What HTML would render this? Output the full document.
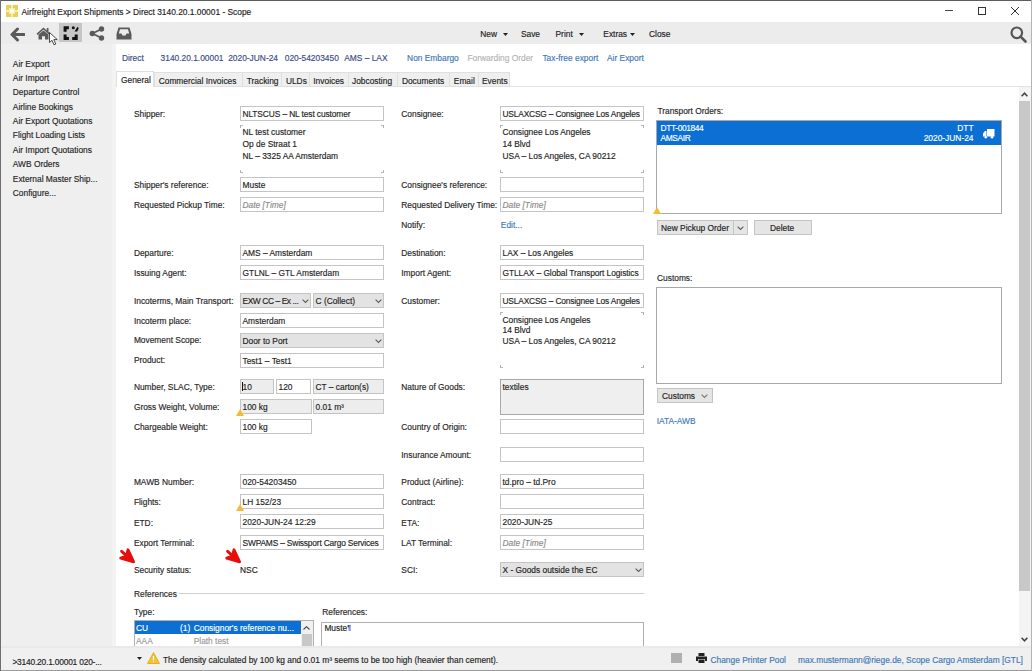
<!DOCTYPE html><html><head><meta charset="utf-8"><style>
html,body{margin:0;padding:0}
body{width:1032px;height:671px;overflow:hidden;position:relative;background:#fff;font-family:"Liberation Sans",sans-serif;font-size:8.4px;color:#262626}
.t{position:absolute;white-space:nowrap;line-height:10px;font-size:8.4px;-webkit-text-stroke:0.15px currentColor}
.b{position:absolute;box-sizing:border-box}
.inp{position:absolute;box-sizing:border-box;height:15px;border:1px solid #c4c4c4;background:#fff}
</style></head><body>

<div class="b" style="left:0px;top:0px;width:1032px;height:671px;background:#fff"></div>
<div class="b" style="left:1px;top:22px;width:1030px;height:22px;background:#ececec"></div>
<div class="b" style="left:1px;top:44px;width:115px;height:602px;background:#efefef"></div>
<div class="b" style="left:112px;top:44px;width:4px;height:602px;background:#f3f3f3"></div>
<div class="b" style="left:0px;top:0px;width:1032px;height:1px;background:#5c5c5c"></div>
<div class="b" style="left:0px;top:0px;width:1px;height:671px;background:#6e6e6e"></div>
<div class="b" style="left:1031px;top:0px;width:1px;height:671px;background:#b4b4b4"></div>
<div class="b" style="left:0px;top:670px;width:1032px;height:1px;background:#9a9a9a"></div>
<svg class="b" style="left:6px;top:5px" width="12" height="12" viewBox="0 0 12 12"><rect x="0" y="0" width="12" height="12" fill="#f8eca6"/><path d="M0 0h5v3h-2v2h-3z M12 0h-5v3h2v2h3z M0 12h5v-3h-2v-2h-3z M12 12h-5v-3h2v-2h3z" fill="#e7cf58"/><circle cx="6" cy="6" r="2.2" fill="#fdfdf8"/></svg>
<div class="t" style="left:21.5px;top:6.5px;color:#1c1c1c;">Airfreight Export Shipments &gt; Direct 3140.20.1.00001 - Scope</div>
<div class="b" style="left:945px;top:10px;width:8px;height:1px;background:#444"></div>
<div class="b" style="left:978px;top:7px;width:8px;height:8px;border:1px solid #333"></div>
<svg class="b" style="left:1011px;top:7px" width="8" height="8" viewBox="0 0 8 8"><path d="M0 0L8 8M8 0L0 8" stroke="#333" stroke-width="1"/></svg>
<svg class="b" style="left:10px;top:27px" width="15" height="15" viewBox="0 0 15 15"><path d="M14 7.5H3 M7.5 2L2 7.5L7.5 13" fill="none" stroke="#5a5a5a" stroke-width="3" stroke-linecap="round" stroke-linejoin="round"/></svg>
<svg class="b" style="left:36px;top:27px" width="15" height="13" viewBox="0 0 15 13"><path d="M7.5 0.5L0.5 6.8L1.6 7.9L7.5 2.6L13.4 7.9L14.5 6.8L12.5 5V1H10.8V3.4Z" fill="#5a5a5a"/><path d="M2.5 7.6L7.5 3.4L12.5 7.6V12.5H9V9.2H6V12.5H2.5Z" fill="#5a5a5a"/></svg>
<div class="b" style="left:59px;top:23px;width:23px;height:19px;background:#c6c6c6"></div>
<svg class="b" style="left:63px;top:26px" width="16" height="15" viewBox="0 0 16 15"><path d="M0.6 0.3h5.3v3h-2.3v2.4h-3z M0.6 13.9h5.3v-3h-2.3v-2.3h-3z M14.7 13.9h-5.5v-3h2.5v-2.3h3z M11.5 5.5h2.8l1.4-3.2l-1.2-1.6z" fill="#111"/><circle cx="10.3" cy="1.8" r="1.5" fill="#111"/></svg>
<svg class="b" style="left:49px;top:32px" width="10" height="14" viewBox="0 0 10 14"><path d="M0.5 0.5V10.5L3 8.3L5 12.8L6.8 12L4.8 7.6H8.3Z" fill="#fff" stroke="#222" stroke-width="0.8"/></svg>
<svg class="b" style="left:89px;top:26px" width="16" height="16" viewBox="0 0 16 16"><path d="M12.5 3L3.5 7.5L12.5 12" fill="none" stroke="#5a5a5a" stroke-width="1.8"/><circle cx="12.5" cy="3" r="2.7" fill="#5a5a5a"/><circle cx="3.3" cy="7.5" r="2.7" fill="#5a5a5a"/><circle cx="12.5" cy="12" r="2.7" fill="#5a5a5a"/></svg>
<svg class="b" style="left:116px;top:27px" width="16" height="13" viewBox="0 0 16 13"><path d="M2.5 0.5H13.5L15.5 7V12.5H0.5V7Z M2.8 6.5H5.5L6.5 8.5H9.5L10.5 6.5H13.2L12 2.2H4Z" fill="#5a5a5a" fill-rule="evenodd"/></svg>
<div class="t" style="left:480.2px;top:28.799999999999997px;color:#222;">New</div>
<div class="t" style="left:520.9px;top:28.799999999999997px;color:#222;">Save</div>
<div class="t" style="left:555.5px;top:28.799999999999997px;color:#222;">Print</div>
<div class="t" style="left:603.3px;top:28.799999999999997px;color:#222;">Extras</div>
<div class="t" style="left:649px;top:28.799999999999997px;color:#222;">Close</div>
<svg class="b" style="left:503.3px;top:33px" width="5" height="3" viewBox="0 0 5 3"><path d="M0 0H5L2.5 3Z" fill="#222"/></svg>
<svg class="b" style="left:578.5px;top:33px" width="5" height="3" viewBox="0 0 5 3"><path d="M0 0H5L2.5 3Z" fill="#222"/></svg>
<svg class="b" style="left:630.4px;top:33px" width="5" height="3" viewBox="0 0 5 3"><path d="M0 0H5L2.5 3Z" fill="#222"/></svg>
<svg class="b" style="left:1010px;top:26px" width="17" height="17" viewBox="0 0 17 17"><circle cx="6.8" cy="6.8" r="5.3" fill="none" stroke="#555" stroke-width="2.2"/><path d="M10.6 10.6L15.5 15.5" stroke="#555" stroke-width="2.6" stroke-linecap="round"/></svg>
<div class="t" style="left:12.8px;top:58.5px;color:#262626;">Air Export</div>
<div class="t" style="left:12.8px;top:72.88px;color:#262626;">Air Import</div>
<div class="t" style="left:12.8px;top:87.26px;color:#262626;">Departure Control</div>
<div class="t" style="left:12.8px;top:101.64px;color:#262626;">Airline Bookings</div>
<div class="t" style="left:12.8px;top:116.02000000000001px;color:#262626;">Air Export Quotations</div>
<div class="t" style="left:12.8px;top:130.4px;color:#262626;">Flight Loading Lists</div>
<div class="t" style="left:12.8px;top:144.78px;color:#262626;">Air Import Quotations</div>
<div class="t" style="left:12.8px;top:159.16000000000003px;color:#262626;">AWB Orders</div>
<div class="t" style="left:12.8px;top:173.54000000000002px;color:#262626;">External Master Ship...</div>
<div class="t" style="left:12.8px;top:187.92000000000002px;color:#262626;">Configure...</div>
<div class="t" style="left:121.9px;top:52.6px;color:#3b4a86;">Direct</div>
<div class="t" style="left:160.6px;top:52.6px;color:#3b4a86;">3140.20.1.00001</div>
<div class="t" style="left:228.2px;top:52.6px;color:#3b4a86;">2020-JUN-24</div>
<div class="t" style="left:284.8px;top:52.6px;color:#3b4a86;">020-54203450</div>
<div class="t" style="left:344.2px;top:52.6px;color:#3b4a86;">AMS – LAX</div>
<div class="t" style="left:407.1px;top:52.6px;color:#3d78b6;">Non Embargo</div>
<div class="t" style="left:467.5px;top:52.6px;color:#b4b4b4;">Forwarding Order</div>
<div class="t" style="left:542.4px;top:52.6px;color:#3d78b6;">Tax-free export</div>
<div class="t" style="left:607px;top:52.6px;color:#3d78b6;">Air Export</div>
<div class="b" style="left:116px;top:86px;width:915px;height:1px;background:#e2e2e2"></div>
<div class="b" style="left:154px;top:72px;width:89px;height:15px;background:#efefef;border:1px solid #e0e0e0"></div>
<div class="t" style="left:158.7px;top:75.7px;color:#222;">Commercial Invoices</div>
<div class="b" style="left:242px;top:72px;width:40px;height:15px;background:#efefef;border:1px solid #e0e0e0"></div>
<div class="t" style="left:246.7px;top:75.7px;color:#222;">Tracking</div>
<div class="b" style="left:281px;top:72px;width:29px;height:15px;background:#efefef;border:1px solid #e0e0e0"></div>
<div class="t" style="left:285.9px;top:75.7px;color:#222;">ULDs</div>
<div class="b" style="left:309px;top:72px;width:40px;height:15px;background:#efefef;border:1px solid #e0e0e0"></div>
<div class="t" style="left:313.3px;top:75.7px;color:#222;">Invoices</div>
<div class="b" style="left:348px;top:72px;width:50px;height:15px;background:#efefef;border:1px solid #e0e0e0"></div>
<div class="t" style="left:352px;top:75.7px;color:#222;">Jobcosting</div>
<div class="b" style="left:397px;top:72px;width:53px;height:15px;background:#efefef;border:1px solid #e0e0e0"></div>
<div class="t" style="left:401.9px;top:75.7px;color:#222;">Documents</div>
<div class="b" style="left:449px;top:72px;width:30px;height:15px;background:#efefef;border:1px solid #e0e0e0"></div>
<div class="t" style="left:453.8px;top:75.7px;color:#222;">Email</div>
<div class="b" style="left:478px;top:72px;width:32px;height:15px;background:#efefef;border:1px solid #e0e0e0"></div>
<div class="t" style="left:482px;top:75.7px;color:#222;">Events</div>
<div class="b" style="left:116px;top:71px;width:38px;height:16px;background:#fff;border:1px solid #e0e0e0;border-bottom:none"></div>
<div class="t" style="left:121px;top:74.5px;color:#222;">General</div>
<div class="b" style="left:1019px;top:87px;width:12px;height:559px;background:#f4f4f4"></div>
<div class="b" style="left:1019px;top:101px;width:11px;height:490px;background:#c8c8c8"></div>
<svg class="b" style="left:1021px;top:92px" width="7" height="5" viewBox="0 0 7 5"><path d="M0.6 4.2 L3.5 1.2 L6.4 4.2" fill="none" stroke="#444" stroke-width="1.6"/></svg>
<svg class="b" style="left:1021px;top:637px" width="7" height="5" viewBox="0 0 7 5"><path d="M0.6 0.8 L3.5 3.8 L6.4 0.8" fill="none" stroke="#444" stroke-width="1.6"/></svg>
<div class="t" style="left:133.9px;top:108.5px;">Shipper:</div>
<div class="t" style="left:133.9px;top:180px;">Shipper's reference:</div>
<div class="t" style="left:133.9px;top:199.7px;">Requested Pickup Time:</div>
<div class="t" style="left:133.9px;top:248.10000000000002px;">Departure:</div>
<div class="t" style="left:133.9px;top:268.1px;">Issuing Agent:</div>
<div class="t" style="left:133.9px;top:295.9px;">Incoterms, Main Transport:</div>
<div class="t" style="left:133.9px;top:315.9px;">Incoterm place:</div>
<div class="t" style="left:133.9px;top:335.2px;">Movement Scope:</div>
<div class="t" style="left:133.9px;top:355.4px;">Product:</div>
<div class="t" style="left:133.9px;top:382.25px;">Number, SLAC, Type:</div>
<div class="t" style="left:133.9px;top:401.9px;">Gross Weight, Volume:</div>
<div class="t" style="left:133.9px;top:421.6px;">Chargeable Weight:</div>
<div class="t" style="left:133.9px;top:477.2px;">MAWB Number:</div>
<div class="t" style="left:133.9px;top:497.3px;">Flights:</div>
<div class="t" style="left:133.9px;top:517.5px;">ETD:</div>
<div class="t" style="left:133.9px;top:537.6px;">Export Terminal:</div>
<div class="t" style="left:133.9px;top:564.5px;">Security status:</div>
<div class="inp" style="left:240px;top:106px;width:144px;"></div>
<div class="t" style="left:242.5px;top:109px;color:#1e1e1e;letter-spacing:-0.112px;">NLTSCUS – NL test customer</div>
<div class="b" style="left:240px;top:125px;width:1px;height:3px;background:#b4b4b4"></div>
<div class="b" style="left:240px;top:125px;width:3px;height:1px;background:#b4b4b4"></div>
<div class="b" style="left:383px;top:125px;width:1px;height:3px;background:#b4b4b4"></div>
<div class="b" style="left:381px;top:125px;width:3px;height:1px;background:#b4b4b4"></div>
<div class="b" style="left:240px;top:170px;width:1px;height:3px;background:#b4b4b4"></div>
<div class="b" style="left:240px;top:172px;width:3px;height:1px;background:#b4b4b4"></div>
<div class="b" style="left:383px;top:170px;width:1px;height:3px;background:#b4b4b4"></div>
<div class="b" style="left:381px;top:172px;width:3px;height:1px;background:#b4b4b4"></div>
<div class="t" style="left:242.5px;top:127px;color:#1e1e1e;">NL test customer</div>
<div class="t" style="left:242.5px;top:138.5px;color:#1e1e1e;">Op de Straat 1</div>
<div class="t" style="left:242.5px;top:150.5px;color:#1e1e1e;">NL – 3325 AA Amsterdam</div>
<div class="inp" style="left:240px;top:177px;width:144px;"></div>
<div class="t" style="left:242.5px;top:180px;color:#1e1e1e;">Muste</div>
<div class="inp" style="left:240px;top:197px;width:144px;"></div>
<div class="t" style="left:242.5px;top:200px;color:#8a8a8a;font-style:italic;">Date [Time]</div>
<div class="inp" style="left:240px;top:245px;width:144px;"></div>
<div class="t" style="left:242.5px;top:248px;color:#1e1e1e;">AMS – Amsterdam</div>
<div class="inp" style="left:240px;top:265px;width:144px;"></div>
<div class="t" style="left:242.5px;top:268px;color:#1e1e1e;">GTLNL – GTL Amsterdam</div>
<div class="inp" style="left:240px;top:293px;width:71px;background:#e3e3e3;"></div>
<div class="t" style="left:242.5px;top:296px;color:#1e1e1e;letter-spacing:-0.405px;">EXW CC – Ex ...</div>
<svg class="b" style="left:302px;top:299px" width="7" height="5" viewBox="0 0 7 5"><path d="M0.6 0.6 L3.5 3.5 L6.4 0.6" fill="none" stroke="#5c5c5c" stroke-width="1.1"/></svg>
<div class="inp" style="left:313px;top:293px;width:71px;background:#e3e3e3;"></div>
<div class="t" style="left:315.5px;top:296px;color:#1e1e1e;">C (Collect)</div>
<svg class="b" style="left:375px;top:299px" width="7" height="5" viewBox="0 0 7 5"><path d="M0.6 0.6 L3.5 3.5 L6.4 0.6" fill="none" stroke="#5c5c5c" stroke-width="1.1"/></svg>
<div class="inp" style="left:240px;top:313px;width:144px;"></div>
<div class="t" style="left:242.5px;top:316px;color:#1e1e1e;">Amsterdam</div>
<div class="inp" style="left:240px;top:333px;width:144px;background:#e3e3e3;"></div>
<div class="t" style="left:242.5px;top:336px;color:#1e1e1e;">Door to Port</div>
<svg class="b" style="left:375px;top:339px" width="7" height="5" viewBox="0 0 7 5"><path d="M0.6 0.6 L3.5 3.5 L6.4 0.6" fill="none" stroke="#5c5c5c" stroke-width="1.1"/></svg>
<div class="inp" style="left:240px;top:353px;width:144px;"></div>
<div class="t" style="left:242.5px;top:356px;color:#1e1e1e;">Test1 – Test1</div>
<div class="inp" style="left:240px;top:379px;width:34px;background:#ededed;"></div>
<div class="t" style="left:242.5px;top:382px;color:#1e1e1e;">10</div>
<div class="b" style="left:242px;top:382px;width:1px;height:9px;background:#111"></div>
<div class="inp" style="left:276px;top:379px;width:35px;"></div>
<div class="t" style="left:278.5px;top:382px;color:#1e1e1e;">120</div>
<div class="inp" style="left:313px;top:379px;width:71px;background:#ededed;"></div>
<div class="t" style="left:315.5px;top:382px;color:#1e1e1e;">CT – carton(s)</div>
<div class="inp" style="left:240px;top:399px;width:72px;background:#ededed;"></div>
<div class="t" style="left:242.5px;top:402px;color:#1e1e1e;">100 kg</div>
<div class="inp" style="left:313px;top:399px;width:71px;background:#ededed;"></div>
<div class="t" style="left:315.5px;top:402px;color:#1e1e1e;">0.01 m³</div>
<div class="inp" style="left:240px;top:419px;width:72px;"></div>
<div class="t" style="left:242.5px;top:422px;color:#1e1e1e;">100 kg</div>
<svg class="b" style="left:236px;top:409px" width="8" height="7" viewBox="0 0 8 7"><path d="M4 0 L8 7 L0 7 Z" fill="#f2bd35"/></svg>
<div class="inp" style="left:240px;top:474px;width:144px;"></div>
<div class="t" style="left:242.5px;top:477px;color:#1e1e1e;">020-54203450</div>
<div class="inp" style="left:240px;top:494px;width:144px;"></div>
<div class="t" style="left:242.5px;top:497px;color:#1e1e1e;">LH 152/23</div>
<svg class="b" style="left:236px;top:504px" width="8" height="7" viewBox="0 0 8 7"><path d="M4 0 L8 7 L0 7 Z" fill="#f2bd35"/></svg>
<div class="inp" style="left:240px;top:514px;width:144px;"></div>
<div class="t" style="left:242.5px;top:517px;color:#1e1e1e;">2020-JUN-24 12:29</div>
<div class="inp" style="left:240px;top:535px;width:144px;"></div>
<div class="t" style="left:242.5px;top:538px;color:#1e1e1e;letter-spacing:-0.174px;">SWPAMS – Swissport Cargo Services</div>
<div class="t" style="left:240px;top:564.5px;color:#1e1e1e;">NSC</div>
<svg class="b" style="left:115px;top:544px" width="25" height="22" viewBox="0 0 25 22"><g stroke="#e60d0d" stroke-width="2.9" stroke-linecap="round" stroke-linejoin="round" fill="#e60d0d"><path d="M6.6 7.3L17.5 16.8" fill="none"/><path d="M13 5.8L18.6 17.8L5.8 14.1L11.5 12Z"/></g></svg>
<svg class="b" style="left:221px;top:544px" width="25" height="22" viewBox="0 0 25 22"><g stroke="#e60d0d" stroke-width="2.9" stroke-linecap="round" stroke-linejoin="round" fill="#e60d0d"><path d="M6.6 7.3L17.5 16.8" fill="none"/><path d="M13 5.8L18.6 17.8L5.8 14.1L11.5 12Z"/></g></svg>
<div class="t" style="left:401.3px;top:108.5px;">Consignee:</div>
<div class="t" style="left:401.3px;top:180px;">Consignee's reference:</div>
<div class="t" style="left:401.3px;top:199.7px;">Requested Delivery Time:</div>
<div class="t" style="left:401.3px;top:220.3px;">Notify:</div>
<div class="t" style="left:401.3px;top:248.10000000000002px;">Destination:</div>
<div class="t" style="left:401.3px;top:268.1px;">Import Agent:</div>
<div class="t" style="left:401.3px;top:295.9px;">Customer:</div>
<div class="t" style="left:401.3px;top:382px;">Nature of Goods:</div>
<div class="t" style="left:401.3px;top:422px;">Country of Origin:</div>
<div class="t" style="left:401.3px;top:450px;">Insurance Amount:</div>
<div class="t" style="left:401.3px;top:477.2px;">Product (Airline):</div>
<div class="t" style="left:401.3px;top:497.3px;">Contract:</div>
<div class="t" style="left:401.3px;top:517.5px;">ETA:</div>
<div class="t" style="left:401.3px;top:537.6px;">LAT Terminal:</div>
<div class="t" style="left:401.3px;top:564.5px;">SCI:</div>
<div class="inp" style="left:500px;top:106px;width:144px;"></div>
<div class="t" style="left:502.5px;top:109px;color:#1e1e1e;letter-spacing:-0.176px;">USLAXCSG – Consignee Los Angeles</div>
<div class="b" style="left:500px;top:125px;width:1px;height:3px;background:#b4b4b4"></div>
<div class="b" style="left:500px;top:125px;width:3px;height:1px;background:#b4b4b4"></div>
<div class="b" style="left:643px;top:125px;width:1px;height:3px;background:#b4b4b4"></div>
<div class="b" style="left:641px;top:125px;width:3px;height:1px;background:#b4b4b4"></div>
<div class="b" style="left:500px;top:170px;width:1px;height:3px;background:#b4b4b4"></div>
<div class="b" style="left:500px;top:172px;width:3px;height:1px;background:#b4b4b4"></div>
<div class="b" style="left:643px;top:170px;width:1px;height:3px;background:#b4b4b4"></div>
<div class="b" style="left:641px;top:172px;width:3px;height:1px;background:#b4b4b4"></div>
<div class="t" style="left:502.5px;top:127px;color:#1e1e1e;">Consignee Los Angeles</div>
<div class="t" style="left:502.5px;top:138.5px;color:#1e1e1e;">14 Blvd</div>
<div class="t" style="left:502.5px;top:150.5px;color:#1e1e1e;">USA – Los Angeles, CA 90212</div>
<div class="inp" style="left:500px;top:177px;width:144px;"></div>
<div class="inp" style="left:500px;top:197px;width:144px;"></div>
<div class="t" style="left:502.5px;top:200px;color:#8a8a8a;font-style:italic;">Date [Time]</div>
<div class="t" style="left:500.8px;top:220.3px;color:#3d78b6;">Edit...</div>
<div class="inp" style="left:500px;top:245px;width:144px;"></div>
<div class="t" style="left:502.5px;top:248px;color:#1e1e1e;">LAX – Los Angeles</div>
<div class="inp" style="left:500px;top:265px;width:144px;"></div>
<div class="t" style="left:502.5px;top:268px;color:#1e1e1e;letter-spacing:-0.061px;">GTLLAX – Global Transport Logistics</div>
<div class="inp" style="left:500px;top:293px;width:144px;"></div>
<div class="t" style="left:502.5px;top:296px;color:#1e1e1e;letter-spacing:-0.176px;">USLAXCSG – Consignee Los Angeles</div>
<div class="b" style="left:500px;top:312px;width:1px;height:3px;background:#b4b4b4"></div>
<div class="b" style="left:500px;top:312px;width:3px;height:1px;background:#b4b4b4"></div>
<div class="b" style="left:643px;top:312px;width:1px;height:3px;background:#b4b4b4"></div>
<div class="b" style="left:641px;top:312px;width:3px;height:1px;background:#b4b4b4"></div>
<div class="b" style="left:500px;top:365px;width:1px;height:3px;background:#b4b4b4"></div>
<div class="b" style="left:500px;top:367px;width:3px;height:1px;background:#b4b4b4"></div>
<div class="b" style="left:643px;top:365px;width:1px;height:3px;background:#b4b4b4"></div>
<div class="b" style="left:641px;top:367px;width:3px;height:1px;background:#b4b4b4"></div>
<div class="t" style="left:502.5px;top:314.5px;color:#1e1e1e;">Consignee Los Angeles</div>
<div class="t" style="left:502.5px;top:325px;color:#1e1e1e;">14 Blvd</div>
<div class="t" style="left:502.5px;top:335.5px;color:#1e1e1e;">USA – Los Angeles, CA 90212</div>
<div class="b" style="left:500px;top:379px;width:144px;height:36px;background:#efefef;border:1px solid #a8a8a8"></div>
<div class="t" style="left:502.5px;top:382px;color:#1e1e1e;">textiles</div>
<div class="inp" style="left:500px;top:419px;width:144px;"></div>
<div class="inp" style="left:500px;top:447px;width:144px;"></div>
<div class="inp" style="left:500px;top:474px;width:144px;"></div>
<div class="t" style="left:502.5px;top:477px;color:#1e1e1e;">td.pro – td.Pro</div>
<div class="inp" style="left:500px;top:494px;width:144px;"></div>
<div class="inp" style="left:500px;top:514px;width:144px;"></div>
<div class="t" style="left:502.5px;top:517px;color:#1e1e1e;">2020-JUN-25</div>
<div class="inp" style="left:500px;top:535px;width:144px;"></div>
<div class="t" style="left:502.5px;top:538px;color:#8a8a8a;font-style:italic;">Date [Time]</div>
<div class="inp" style="left:500px;top:562px;width:144px;background:#e3e3e3;"></div>
<div class="t" style="left:502.5px;top:565px;color:#1e1e1e;">X - Goods outside the EC</div>
<svg class="b" style="left:635px;top:568px" width="7" height="5" viewBox="0 0 7 5"><path d="M0.6 0.6 L3.5 3.5 L6.4 0.6" fill="none" stroke="#5c5c5c" stroke-width="1.1"/></svg>
<div class="t" style="left:134px;top:589px;">References</div>
<div class="b" style="left:179px;top:593px;width:465px;height:1px;background:#d0d0d0"></div>
<div class="t" style="left:134px;top:607.2px;">Type:</div>
<div class="t" style="left:322.2px;top:607.2px;">References:</div>
<div class="b" style="left:134px;top:620px;width:180px;height:30px;border:1px solid #b0b0b0;background:#fff"></div>
<div class="b" style="left:135px;top:621px;width:166px;height:13px;background:#0b6fd3"></div>
<div class="t" style="left:136px;top:623px;color:#fff;">CU</div>
<div class="t" style="left:180px;top:623px;color:#fff;">(1)</div>
<div class="t" style="left:193.7px;top:623px;color:#fff;">Consignor's reference nu...</div>
<div class="t" style="left:136px;top:636px;color:#9a9a9a;">AAA</div>
<div class="t" style="left:193.7px;top:636px;color:#9a9a9a;">Plath test</div>
<div class="b" style="left:301px;top:621px;width:12px;height:30px;background:#f0f0f0"></div>
<div class="b" style="left:302px;top:634px;width:10px;height:16px;background:#c8c8c8"></div>
<svg class="b" style="left:303px;top:626px" width="7" height="4" viewBox="0 0 7 4"><path d="M0.5 3.5 L3.5 0.7 L6.5 3.5" fill="none" stroke="#444" stroke-width="1.1"/></svg>
<div class="b" style="left:321px;top:622px;width:323px;height:30px;border:1px solid #b0b0b0;background:#fff"></div>
<div class="t" style="left:324.4px;top:623px;color:#1e1e1e;">Muste<span style="color:#3030c0;font-size:7px;vertical-align:top">¶</span></div>
<div class="t" style="left:657.4px;top:105.8px;">Transport Orders:</div>
<div class="b" style="left:656px;top:120px;width:346px;height:94px;border:1px solid #a8a8a8;background:#fff"></div>
<div class="b" style="left:657px;top:121px;width:344px;height:24px;background:#0b6fd3"></div>
<div class="t" style="left:660.5px;top:123.30000000000001px;color:#fff;letter-spacing:-0.369px;">DTT-001844</div>
<div class="t" style="left:660.5px;top:133.1px;color:#fff;letter-spacing:-0.368px;">AMSAIR</div>
<div class="t" style="right:58.5px;top:123.30000000000001px;color:#fff;">DTT</div>
<div class="t" style="right:58.5px;top:133.1px;color:#fff;">2020-JUN-24</div>
<svg class="b" style="left:983px;top:129px" width="12" height="10" viewBox="0 0 12 10"><path d="M4 0H11.5V7.5H4Z M3.5 2H1.8L0 4.5V7.5H3.5Z" fill="#fff"/><circle cx="2.8" cy="8.3" r="1.3" fill="#fff"/><circle cx="9" cy="8.3" r="1.3" fill="#fff"/></svg>
<svg class="b" style="left:652.5px;top:207px" width="8" height="7" viewBox="0 0 8 7"><path d="M4 0 L8 7 L0 7 Z" fill="#f2bd35"/></svg>
<div class="b" style="left:657px;top:220px;width:91px;height:15px;border:1px solid #c4c4c4;background:#e5e5e5"></div>
<div class="b" style="left:733px;top:221px;width:1px;height:13px;background:#c4c4c4"></div>
<div class="t" style="left:661px;top:222.5px;color:#222;">New Pickup Order</div>
<svg class="b" style="left:737px;top:226px" width="7" height="5" viewBox="0 0 7 5"><path d="M0.6 0.6 L3.5 3.5 L6.4 0.6" fill="none" stroke="#5c5c5c" stroke-width="1.1"/></svg>
<div class="b" style="left:754px;top:220px;width:58px;height:15px;border:1px solid #c4c4c4;background:#e5e5e5"></div>
<div class="t" style="left:770px;top:222.5px;color:#222;">Delete</div>
<div class="t" style="left:657px;top:272.5px;">Customs:</div>
<div class="b" style="left:656px;top:287px;width:346px;height:97px;border:1px solid #a8a8a8;background:#fff"></div>
<div class="b" style="left:657px;top:388px;width:56px;height:15px;border:1px solid #c4c4c4;background:#e5e5e5"></div>
<div class="t" style="left:662px;top:390.8px;color:#222;">Customs</div>
<svg class="b" style="left:701px;top:394px" width="7" height="5" viewBox="0 0 7 5"><path d="M0.6 0.6 L3.5 3.5 L6.4 0.6" fill="none" stroke="#777" stroke-width="1.1"/></svg>
<div class="t" style="left:656.7px;top:415.7px;color:#3d78b6;">IATA-AWB</div>
<div class="b" style="left:1px;top:646px;width:1030px;height:24px;background:#f0f0f0"></div>
<div class="b" style="left:1px;top:646px;width:1030px;height:2px;background:#e9e9e9"></div>
<div class="b" style="left:1px;top:670px;width:1032px;height:1px;background:#9a9a9a"></div>
<div class="b" style="left:0px;top:646px;width:1px;height:25px;background:#6e6e6e"></div>
<div class="b" style="left:1031px;top:646px;width:1px;height:25px;background:#b4b4b4"></div>
<div class="t" style="left:12.4px;top:656.8px;color:#222;letter-spacing:-0.192px;">&gt;3140.20.1.00001 020-...</div>
<svg class="b" style="left:137px;top:657px" width="5" height="3" viewBox="0 0 5 3"><path d="M0 0H5L2.5 3Z" fill="#222"/></svg>
<svg class="b" style="left:147px;top:652px" width="13" height="12" viewBox="0 0 13 12"><path d="M6.5 0.5L12.5 11.5H0.5Z" fill="#f1c232" stroke="#e0a800" stroke-width="0.8" stroke-linejoin="round"/><path d="M6.5 4V8" stroke="#fff" stroke-width="1.2"/><circle cx="6.5" cy="9.7" r="0.7" fill="#fff"/></svg>
<div class="t" style="left:163px;top:654.5px;color:#1e1e1e;">The density calculated by 100 kg and 0.01 m³ seems to be too high (heavier than cement).</div>
<div class="b" style="left:671px;top:653px;width:11px;height:10px;background:#b0b0b0"></div>
<svg class="b" style="left:696px;top:653px" width="11" height="10" viewBox="0 0 11 10"><path d="M2.5 0H8.5V3H2.5Z M0 3.5H11V8H9V6H2V8H0Z M2.5 6.5H8.5V10H2.5Z" fill="#222"/></svg>
<div class="t" style="left:710.5px;top:654.5px;color:#3d78b6;">Change Printer Pool</div>
<div class="t" style="left:798px;top:654.5px;color:#3d78b6;">max.mustermann@riege.de, Scope Cargo Amsterdam [GTL]</div>
</body></html>
